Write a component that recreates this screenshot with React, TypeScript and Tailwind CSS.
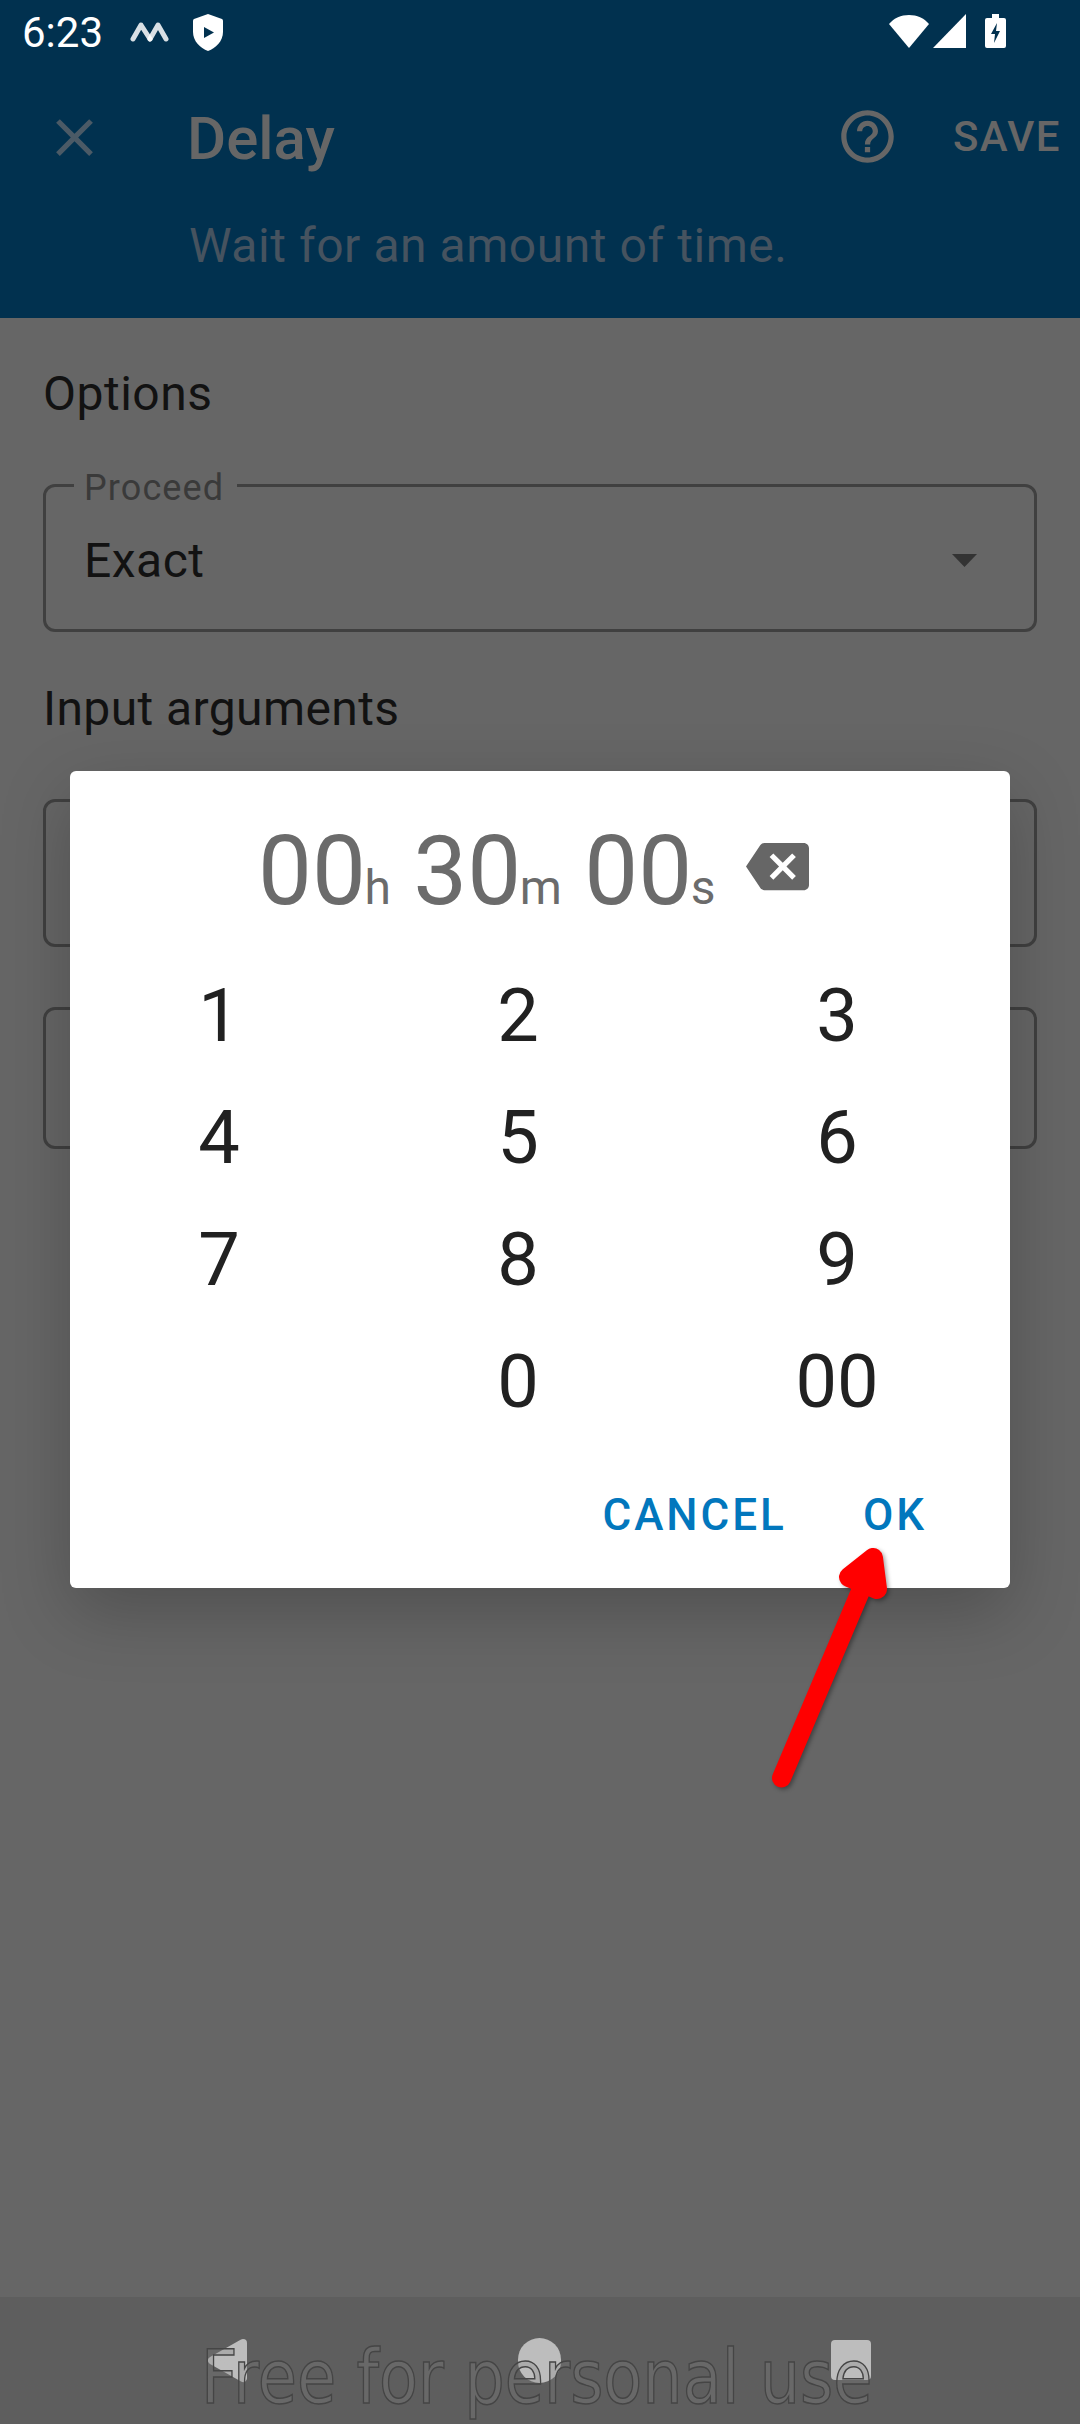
import React from "react";

const font = "font-['Roboto',sans-serif]";

function StatusBar() {
  return (
    <div className="flex h-[66px] items-center pl-[22px] pr-[74px] text-white">
      <span className="text-[42px] leading-[66px]">6:23</span>
      <svg width="40" height="24" viewBox="0 0 40 24" className="ml-[27px] mt-[-4px]" fill="none" stroke="#fff" strokeWidth="5" strokeLinecap="round" strokeLinejoin="round">
        <path d="M3 20 L11 6 L20 20" opacity="0.85" />
        <path d="M20 20 L28 6 L36 20" opacity="0.85" />
      </svg>
      <svg width="30" height="37" viewBox="0 0 30 37" className="ml-[23px] mt-[-2px]">
        <path d="M15 0 L29 5 Q30 5.500 30 7 V18 C30 27 23 34 15 37 C7 34 0 27 0 18 V7 Q0 5.500 1 5 Z" fill="#fff" />
        <path d="M11 13 L21 18.500 L11 24 Z" fill="#01314f" />
      </svg>
      <div className="flex-1" />
      <svg width="40" height="33" viewBox="0 0 40 33" className="mt-[-4px]">
        <path d="M20 33 L0 9 C5 3 12 0 20 0 C28 0 35 3 40 9 Z" fill="#fff" />
      </svg>
      <svg width="33" height="34" viewBox="0 0 33 34" className="ml-[4px] mt-[-4px]">
        <path d="M0 34 L33 0 V34 Z" fill="#fff" />
      </svg>
      <svg width="21" height="34" viewBox="0 0 21 34" className="ml-[19px] mt-[-4px]">
        <path d="M7 0 H14 V4 H19 Q21 4 21 6 V32 Q21 34 19 34 H2 Q0 34 0 32 V6 Q0 4 2 4 H7 Z" fill="#fff" />
        <path d="M12 9 L6 20 H10 L9 29 L15 17 H11 Z" fill="#01314f" />
      </svg>
    </div>
  );
}

function Toolbar() {
  return (
    <div className="flex h-[142px] items-center pl-[43px] pr-[19px]">
      <svg width="63" height="63" viewBox="0 0 24 24" fill="#4b5a66">
        <path d="M19 6.410L17.590 5 12 10.590 6.410 5 5 6.410 10.590 12 5 17.590 6.410 19 12 13.410 17.590 19 19 17.590 13.410 12z" />
      </svg>
      <span className="ml-[81px] flex-1 pt-[4px] text-[60px] font-medium leading-[70px] text-[#666666]">Delay</span>
      <svg width="63" height="63" viewBox="0 0 24 24" fill="#666666" className="mt-[-1px]">
        <path d="M11 18h2v-2h-2v2zm1-16C6.480 2 2 6.480 2 12s4.480 10 10 10 10-4.480 10-10S17.520 2 12 2zm0 18c-4.410 0-8-3.590-8-8s3.590-8 8-8 8 3.590 8 8-3.590 8-8 8zm0-14c-2.210 0-4 1.790-4 4h2c0-1.100.9-2 2-2s2 .9 2 2c0 2-3 1.750-3 5h2c0-2.250 3-2.500 3-5 0-2.210-1.790-4-4-4z" />
      </svg>
      <span className="ml-[54px] text-[42px] font-medium leading-[60px] tracking-[1.4px] text-[#666666]">SAVE</span>
    </div>
  );
}

function Field({ label, value, h }: { label?: string; value?: string; h: string }) {
  return (
    <div className={`relative flex items-center rounded-[12px] border-[3px] border-[#404040] pl-[38px] pr-[57px] ${h}`}>
      {label && (
        <span className="absolute left-[28px] top-[-17px] bg-[#666666] pl-[10px] pr-[13px] text-[36px] leading-[36px] tracking-[1.1px] text-[#3a3a3a]">{label}</span>
      )}
      {value && (
        <>
          <span className="flex-1 pt-[6px] text-[48px] leading-[60px] tracking-[0.5px] text-[#121212]">{value}</span>
          <svg width="25" height="13" viewBox="0 0 25 13" className="mt-[4px]">
            <path d="M0 0 H25 L12.500 13 Z" fill="#333333" />
          </svg>
        </>
      )}
    </div>
  );
}

function Backspace() {
  return (
    <svg width="63" height="63" viewBox="0 0 24 24" fill="#666666" className="ml-[30px] mt-[-10px]">
      <path d="M22 3H7c-.69 0-1.230.35-1.590.88L0 12l5.410 8.110c.36.53.9.89 1.590.89h15c1.100 0 2-.9 2-2V5c0-1.100-.9-2-2-2zm-3 12.590L17.590 17 14 13.410 10.410 17 9 15.590 12.590 12 9 8.410 10.410 7 14 10.590 17.590 7 19 8.410 15.410 12 19 15.590z" />
    </svg>
  );
}

function TimeGroup({ v, u }: { v: string; u: string }) {
  return (
    <span className="flex items-baseline">
      <span className="text-[96px] leading-[100px]">{v}</span>
      <span className="ml-[-1.500px] text-[48px] leading-[48px]">{u}</span>
    </span>
  );
}

function Dialog() {
  const keys = ["1", "2", "3", "4", "5", "6", "7", "8", "9", "", "0", "00"];
  return (
    <div className="absolute left-[70px] top-[771px] h-[817px] w-[940px] rounded-[6px] bg-white shadow-[0_24px_70px_rgba(0,0,0,0.22)]">
      <div className="mt-[50px] flex h-[100px] items-center pl-[188px] text-[#6b6b6b]">
        <div className="flex items-baseline gap-[22.500px]">
          <TimeGroup v="00" u="h" />
          <TimeGroup v="30" u="m" />
          <TimeGroup v="00" u="s" />
        </div>
        <Backspace />
      </div>
      <div className="mt-[34px] grid grid-cols-[298px_300px_338px] text-center text-[74px] leading-[122px] text-[#212121]">
        {keys.map((k, i) => (
          <span key={i} className="h-[122px]">{k}</span>
        ))}
      </div>
      <div className="mt-[42px] flex justify-end gap-[76px] pr-[83px] text-[44px] font-medium leading-[60px] tracking-[3px] text-[#0277bd]">
        <span>CANCEL</span>
        <span>OK</span>
      </div>
    </div>
  );
}

function RedArrow() {
  return (
    <svg width="140" height="250" viewBox="0 0 140 250" className="absolute left-[760px] top-[1545px] drop-shadow-[2px_2px_2px_rgba(0,0,0,0.35)]" fill="none">
      <path d="M21.500 233 L101 45" stroke="#ff0000" strokeWidth="19" strokeLinecap="round" />
      <path d="M113 13 L89 32 L117 44 Z" fill="#ff0000" stroke="#ff0000" strokeWidth="20" strokeLinejoin="round" />
    </svg>
  );
}

function NavBar() {
  return (
    <div className="flex h-[127px] items-start justify-between bg-[#5e5e5e] pl-[207px] pr-[209px] pt-[41px]">
      <svg width="41" height="45" viewBox="0 0 41 45">
        <path d="M36 5 L5 22.500 L36 40 Z" fill="#bdbdbd" stroke="#bdbdbd" strokeWidth="8" strokeLinejoin="round" />
      </svg>
      <div className="h-[45px] w-[43px] rounded-full bg-[#bdbdbd]" />
      <div className="mt-[2px] h-[40px] w-[40px] rounded-[4px] bg-[#bdbdbd]" />
    </div>
  );
}

export default function App() {
  return (
    <div className={`relative flex h-[2424px] w-[1080px] flex-col overflow-hidden bg-[#666666] ${font}`}>
      <div className="h-[318px] bg-[#01314f]">
        <StatusBar />
        <Toolbar />
        <div className="pl-[189px] text-[48px] leading-[75px] tracking-[0.55px] text-[#46535f]">Wait for an amount of time.</div>
      </div>
      <div className="flex-1 px-[43px] pt-[46px]">
        <div className="text-[48px] leading-[60px] tracking-[0.5px] text-[#121212]">Options</div>
        <div className="mt-[60px]"><Field label="Proceed" value="Exact" h="h-[148px]" /></div>
        <div className="mt-[47px] text-[48px] leading-[60px] tracking-[0.4px] text-[#121212]">Input arguments</div>
        <div className="mt-[60px]"><Field h="h-[148px]" /></div>
        <div className="mt-[60px]"><Field h="h-[142px]" /></div>
      </div>
      <NavBar />
      <Dialog />
      <RedArrow />
      <div className="absolute left-[201px] top-[2327px] origin-left scale-x-[0.861] whitespace-nowrap font-['DejaVu_Sans',sans-serif] text-[74px] leading-[100px] text-[rgba(130,130,130,0.3)] [-webkit-text-stroke:1.500px_#454545]">
        Free for personal use
      </div>
    </div>
  );
}
